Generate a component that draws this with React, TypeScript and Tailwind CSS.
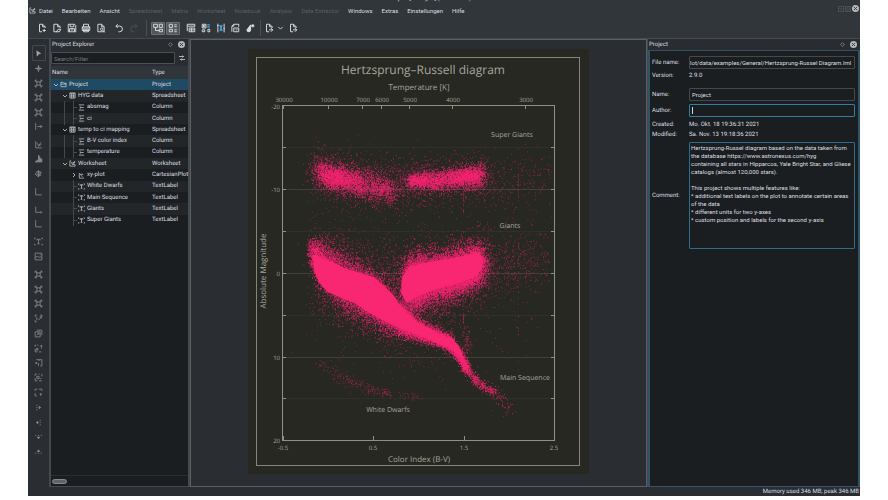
import type { ReactNode } from "react";

const MENU = [
  { label: "Datei" },
  { label: "Bearbeiten" },
  { label: "Ansicht" },
  { label: "Spreadsheet", off: true },
  { label: "Matrix", off: true },
  { label: "Worksheet", off: true },
  { label: "Notebook", off: true },
  { label: "Analysis", off: true },
  { label: "Data Extractor", off: true },
  { label: "Windows" },
  { label: "Extras" },
  { label: "Einstellungen" },
  { label: "Hilfe" },
];

// 16x16 outlines, stroked unless listed in FILLS
const ICONS: Record<string, string> = {
  doc: "M4 2h5l4 4v2M4 2v12h4M9 2v4h4M9 12h5M11.5 9.5v5",
  open: "M8 14H3V2h6l4 4v2M9 2v4h4M7 14l3-4h4l-2 4z",
  save: "M2 2h10l2 2v10H2zM5 2v4h6V2M4 14V9h8v5M6 11h4",
  print: "M4 6V2h8v4M2 6h12v6H2zM2 8h12M4 10h8v4H4z",
  preview: "M3 2h6l4 4v8H3zM9 2v4h4M7 10a2 2 0 1 0 4 0a2 2 0 1 0-4 0M11 12l3 3",
  undo: "M6 2L3 5l3 3M3 5h6a4 4 0 0 1 0 9H7",
  redo: "M10 2l3 3-3 3M13 5H7a4 4 0 0 0 0 9h2",
  tree: "M1 2h6v5H1zM10 2h5v5h-5zM10 10h5v4h-5zM4 7v5h6",
  props: "M2 2h5v5H2zM2 10h5v4H2zM10 3h4M10 6h4M10 11h4M10 14h4",
  workbook: "M2 13V2h12v4M2 5h12M5 8h9v6H5zM5 11h9M9 8v6",
  matrix: "M2 2h6v6H2zM4 3v4M6 3v4M2 11h4v3H2zM11 10h3v4h-3z",
  worksheet: "M3 1v14M13 1v14M2 4h2M12 9h2",
  notebook: "M3 14V5l3-3h8v4M6 8h8v6H6zM6 2v3H3M9 11h3",
  note: "M3 11l6-8v8a3 3 0 1 1-6 0M11 3h3v3h-3z",
  importDoc: "M4 2h5l4 4v2M4 2v12h4M9 2v4h4M8 11h6M11 8l3 3-3 3",
  chevron: "M4 6l4 4 4-4",
  cross: "M8 2v12M2 8h12M4 8l4-4 4 4-4 4z",
  zoomSel: "M2 2l4 4M14 2l-4 4M2 14l4-4M14 14l-4-4M5 5h6v6H5zM2 5V2h3M14 5V2h-3M2 11v3h3M14 11v3h-3",
  arrowRange: "M3 2v12M6 8h8M11 5l3 3-3 3",
  curve: "M3 2v12h11M5 5l3 5 5-6M7 11l6-3",
  hist: "M2 14h12V9h-3V7L8 2v9H5v3z",
  fit: "M2 9l6-6 5 4-5 7zM5 4l7 8M4 11l9-6M8 3v11",
  axis: "M3 2v12h11",
  axisH: "M3 3v10h11M12 11l2 2-2 2",
  text: "M1 4V2h2M13 2h2v2M1 12v2h2M15 12v2h-2M5 6V4h6v2M8 4v8M6 12h4",
  image: "M2 2h12v12H2zM2 11l4-4 3 3 2-2 3 3M10 5h2",
  zoomX: "M2 5V2h3M2 11v3h3M11 2h3v3M5 5v6M8 11l5-6M10 5h3v3",
  zoomBox: "M2 5h9v9H2zM5 2h9v9M5 11l4-4M6 7h3v3",
  scaleA: "M2 5V2h2M2 9v5h4M9 14h4M13 2v6M11 4l2-2 2 2M6 2h2M4 8h3v3H4z",
  scaleB: "M4 3h10v11h-3M2 9h4M8 14V9M4 7v4M9 3v2",
  scaleC: "M2 5V2h3M8 2h2M14 2v4M2 9v5h4M12 9v2M9 14h5M5 6h4v4H5z",
  scaleD: "M2 5V2h4M9 2h5v3M2 9v5h3M10 11h4M12 9v5",
  right: "M5 3v2M5 7v2M5 11v2M9 6l3 2-3 2z",
  left: "M11 3v2M11 7v2M11 11v2M7 6L4 8l3 2z",
  down: "M2 6h2M7 6h2M12 6h2M6 9l2 3 2-3z",
  up: "M2 11h2M7 11h2M12 11h2M6 8l2-3 2 3z",
  sheet: "M2 2h12v12H2zM2 4h12M2 9h12M6 4v10M10 4v10",
  column: "M2 2h12M4 8h9M2 14h12M5 4v2M5 10v2",
  page: "M5 2H2v12h12v-3M5 5l3 5 6-8M8 6h6M8 10h6",
  plot: "M3 2v12h11M5 5h6M5 5l5 6M11 5v2",
  folder: "M2 13V3h5l2 2h5v8zM2 7h12",
  sliders: "M2 5h9M9 3l2 2-2 2M14 11H5M7 9l-2 2 2 2",
  cursor: "M4 2l9 6-5 1-3 5z",
};

// second colour of the two-tone icons
const ACCENTS: Record<string, string> = {
  matrix: "M10 3h4M10 6h4",
  worksheet: "M6 3l4 10M10 3L6 13",
};

const FILLS = ["cursor", "hist", "note", "left", "right", "up", "down"];

function Icon({ name, className = "size-2.5" }: { name: string; className?: string }) {
  return (
    <svg viewBox="0 0 16 16" className={className} aria-hidden="true">
      <path
        d={ICONS[name]}
        fill={FILLS.includes(name) ? "currentColor" : "none"}
        stroke="currentColor"
        strokeWidth="1.5"
      />
      {ACCENTS[name] && <path d={ACCENTS[name]} fill="none" stroke="#3daee9" strokeWidth="2" />}
    </svg>
  );
}

function ToolButton({ name, label, className = "" }: { name: string; label: string; className?: string }) {
  return (
    <button type="button" aria-label={label} className={`flex h-[13px] items-center justify-center ${className}`}>
      <Icon name={name} />
    </button>
  );
}

function Toolbar() {
  return (
    <div className="flex h-5 shrink-0 items-center bg-[#31363b] pl-1.5 text-[#dcdee0]">
      <ToolButton name="doc" label="New" className="w-[15px]" />
      <ToolButton name="open" label="Open" className="w-[15px]" />
      <ToolButton name="save" label="Save" className="w-[15px]" />
      <ToolButton name="print" label="Print" className="w-[14px]" />
      <ToolButton name="preview" label="Print preview" className="w-[15px]" />
      <ToolButton name="undo" label="Undo" className="ml-[3px] w-[15px]" />
      <ToolButton name="redo" label="Redo" className="w-[15px] text-[#4b5054]" />
      <span className="ml-[5px] h-4 w-px bg-[#4a4f54]" />
      <div className="ml-1 flex gap-px">
        <ToolButton name="tree" label="Project explorer" className="w-[14px] rounded-[1px] border border-[#6a6f73] bg-[#52575b]" />
        <ToolButton name="props" label="Properties" className="w-[14px] rounded-[1px] border border-[#6a6f73] bg-[#52575b]" />
      </div>
      <ToolButton name="workbook" label="Workbook" className="ml-[3px] w-[15px]" />
      <ToolButton name="matrix" label="Matrix" className="w-[15px]" />
      <ToolButton name="worksheet" label="Worksheet" className="w-[15px]" />
      <ToolButton name="notebook" label="Notebook" className="w-[14px]" />
      <ToolButton name="note" label="Note" className="w-[15px]" />
      <span className="ml-[3px] h-4 w-px bg-[#4a4f54]" />
      <ToolButton name="importDoc" label="Import" className="w-[15px]" />
      <ToolButton name="chevron" label="Import options" className="w-[9px]" />
      <ToolButton name="importDoc" label="Export" className="w-[15px]" />
    </div>
  );
}

const SIDE_GROUPS = [
  ["cursor", "cross", "zoomSel", "zoomSel", "zoomSel", "arrowRange"],
  ["curve", "hist", "fit"],
  ["axis"],
  ["axisH", "axis"],
  ["text", "image"],
  ["zoomSel", "zoomSel", "zoomSel", "zoomX", "zoomBox", "scaleA", "scaleB", "scaleC", "scaleD", "right", "left", "down", "up"],
];

function SideTools() {
  return (
    <div className="flex w-[21px] shrink-0 flex-col bg-[#2a2e32] pt-1.5 text-[#85898c]">
      <div className="flex h-[414px] flex-col items-center gap-[3px]">
        {SIDE_GROUPS.map((group, g) => (
          <div key={g} className="flex flex-col items-center" style={{ flexGrow: group.length, flexBasis: 0 }}>
            {group.map((name, i) => (
              <button
                key={i}
                type="button"
                aria-label={name}
                className={`flex min-h-0 w-[14px] flex-1 items-center justify-center ${
                  name === "cursor" ? "rounded-[1px] border border-[#44494d]" : ""
                }`}
              >
                <Icon name={name} className={name === "cursor" ? "size-[7px] text-[#a5a8aa]" : "size-[9px]"} />
              </button>
            ))}
          </div>
        ))}
      </div>
    </div>
  );
}

const TREE = [
  { name: "Project", type: "Project", icon: "folder", depth: 0, open: true },
  { name: "HYG data", type: "Spreadsheet", icon: "sheet", depth: 1, open: true },
  { name: "absmag", type: "Column", icon: "column", depth: 2 },
  { name: "ci", type: "Column", icon: "column", depth: 2 },
  { name: "temp to ci mapping", type: "Spreadsheet", icon: "sheet", depth: 1, open: true },
  { name: "B-V color index", type: "Column", icon: "column", depth: 2 },
  { name: "temperature", type: "Column", icon: "column", depth: 2 },
  { name: "Worksheet", type: "Worksheet", icon: "page", depth: 1, open: true },
  { name: "xy-plot", type: "CartesianPlot", icon: "plot", depth: 2, open: false },
  { name: "White Dwarfs", type: "TextLabel", icon: "text", depth: 2 },
  { name: "Main Sequence", type: "TextLabel", icon: "text", depth: 2 },
  { name: "Giants", type: "TextLabel", icon: "text", depth: 2 },
  { name: "Super Giants", type: "TextLabel", icon: "text", depth: 2 },
];

const LAST_BRANCH = TREE.findIndex((row) => row.name === "Worksheet");

function DockHeader({ title }: { title: string }) {
  return (
    <div className="flex h-[11px] shrink-0 items-center bg-[#292d31] pl-px pr-[3px]">
      <h2 className="flex-1">{title}</h2>
      <button type="button" aria-label={`Float ${title}`} className="mr-[5px]">
        <svg viewBox="0 0 8 8" className="size-[5px]">
          <path d="M4 1l3 3-3 3-3-3z" fill="none" stroke="#a5a8aa" />
        </svg>
      </button>
      <CloseButton label={`Close ${title}`} />
    </div>
  );
}

function CloseButton({ label }: { label: string }) {
  return (
    <button type="button" aria-label={label}>
      <svg viewBox="0 0 16 16" className="size-[7px]">
        <circle cx="8" cy="8" r="8" fill="#b4b7b9" />
        <path d="M4.500 4.500l7 7M11.500 4.500l-7 7" stroke="#31363b" strokeWidth="2" />
      </svg>
    </button>
  );
}

function Guide({ line, dash }: { line: boolean; dash?: boolean }) {
  return (
    <span className="flex h-[12px] w-[9px] shrink-0 items-center pl-1">
      <span className={`h-full w-px ${line ? "bg-[#44494d]" : ""}`} />
      {dash && <span className="h-px w-[3px] bg-[#44494d]" />}
    </span>
  );
}

function Explorer() {
  return (
    <section className="flex w-[141px] shrink-0 flex-col border-x-2 border-b border-[#44494d] bg-[#1b1e20]">
      <DockHeader title="Project Explorer" />
      <div className="flex h-4 shrink-0 items-center bg-[#292d31]">
        <input
          aria-label="Search/Filter"
          placeholder="Search/Filter"
          className="h-3 w-0 flex-1 rounded-[1px] border border-[#4b5054] bg-[#1b1e20] px-0.5 outline-none placeholder:text-[#75797c]"
        />
        <button type="button" aria-label="Filter options" className="flex w-[13px] justify-center">
          <Icon name="sliders" className="size-2" />
        </button>
      </div>
      <table className="h-[160px] w-full table-fixed border-collapse text-left">
        <thead>
          <tr className="h-[13px] bg-[#30353a]">
            <th className="p-0 pl-px font-normal">Name</th>
            <th className="w-[37px] p-0 pl-px font-normal">Type</th>
          </tr>
        </thead>
        <tbody>
          {TREE.map((row, i) => (
            <tr key={row.name} className={i === 0 ? "bg-[#1f4a63]" : i % 2 ? "bg-[#232629]" : "bg-[#1b1e20]"}>
              <td className="p-0">
                <div className="flex h-[11px] items-center whitespace-nowrap">
                  {row.depth > 0 && <Guide line={false} />}
                  {row.depth > 1 && <Guide line={i < LAST_BRANCH} />}
                  {row.open === undefined ? (
                    <Guide line dash />
                  ) : (
                    <span className="flex w-[9px] shrink-0 justify-center">
                      <Icon name="chevron" className={`size-2 ${row.open ? "" : "-rotate-90"}`} />
                    </span>
                  )}
                  <Icon name={row.icon} className="mr-0.5 size-[7px]" />
                  {row.name}
                </div>
              </td>
              <td className="py-0 pl-px">{row.type}</td>
            </tr>
          ))}
        </tbody>
      </table>
      <div className="mt-auto flex h-[11px] items-center border-t border-[#292d31] pl-px">
        <span className="h-[5px] w-[15px] rounded-full border border-[#85898c] bg-[#606568]" />
      </div>
    </section>
  );
}

// ---- star field ----

function makeRandom(seed: number) {
  let s = seed;
  return () => {
    s = (s * 1664525 + 1013904223) % 4294967296;
    return s / 4294967296;
  };
}

const rand = makeRandom(20211);
const gauss = () => Math.sqrt(-2 * Math.log(rand() + 1e-9)) * Math.cos(2 * Math.PI * rand());

// x, y, spread, weight of the segment that starts here
type Knot = [number, number, number, number];

function band(count: number, knots: Knot[], blur = 2) {
  const total = knots.slice(0, -1).reduce((sum, k) => sum + k[3], 0);
  let d = "";
  for (let n = 0; n < count; n++) {
    let pick = rand() * total;
    let i = 0;
    while (i < knots.length - 2 && pick > knots[i][3]) {
      pick -= knots[i][3];
      i++;
    }
    const t = rand();
    const a = knots[i];
    const b = knots[i + 1];
    const x = a[0] + (b[0] - a[0]) * t + gauss() * blur;
    const y = a[1] + (b[1] - a[1]) * t + gauss() * (a[2] + (b[2] - a[2]) * t);
    if (x > 36 && x < 305 && y > 58 && y < 389) d += `M${x.toFixed(1)} ${y.toFixed(1)}h.8`;
  }
  return d;
}

const DENSE = [
  // super giants
  band(2800, [[70, 121, 6, 1], [78, 127, 6, 4], [98, 131, 6, 2], [115, 136, 7, 2], [145, 142, 6, 1]], 4),
  band(3200, [[161, 132, 3, 2], [185, 132, 5, 2], [210, 129, 5, 3], [234, 126, 6, 1]], 3),
  // main sequence
  band(11000, [[64, 201, 6, 1], [70, 214, 10, 3], [92, 231, 12, 3], [112, 241, 13, 3], [132, 254, 12, 3], [150, 269, 8, 2], [165, 278, 5, 1]], 3),
  band(4500, [[150, 269, 8, 2], [170, 281, 5, 3], [190, 289, 4, 2], [205, 296, 4, 2]], 1),
  band(1300, [[203, 295, 3, 3], [211, 306, 3, 3], [219, 321, 3, 2]], 2),
  band(420, [[217, 318, 3, 4], [230, 334, 3, 3], [246, 344, 3, 1], [262, 358, 5, 0]], 2),
  // giants
  band(14000, [[160, 234, 14, 3], [172, 233, 13, 3], [195, 227, 12, 3], [215, 222, 11, 3], [232, 214, 10, 1]], 5),
].join("");

const SPARSE = [
  band(2600, [[66, 122, 12, 2], [100, 130, 13, 2], [140, 137, 12, 2], [180, 133, 12, 2], [238, 130, 12, 1]], 6),
  band(3000, [[72, 205, 12, 1], [100, 225, 18, 1], [150, 236, 22, 1], [200, 230, 20, 1], [242, 218, 18, 1]], 6),
  band(1500, [[72, 240, 16, 1], [110, 255, 18, 1], [150, 262, 22, 1], [205, 270, 24, 1]], 8),
  band(230, [[230, 128, 15, 1], [302, 132, 14, 0]], 4),
  band(500, [[230, 216, 16, 2], [270, 215, 16, 1], [302, 212, 14, 0]], 4),
  band(210, [[70, 313, 3, 1], [92, 328, 4, 2], [118, 339, 3, 2], [140, 345, 2, 1], [175, 349, 3, 0]], 3),
  band(80, [[219, 283, 5, 1], [219, 304, 7, 0]], 2),
  band(160, [[50, 225, 40, 1], [110, 260, 40, 1], [290, 280, 40, 0]], 5),
  band(110, [[60, 150, 30, 1], [300, 150, 30, 0]], 5),
  // columns of rounded colour values
  band(30, [[215, 120, 2, 1], [215, 166, 2, 0]], 0),
  band(30, [[215, 235, 8, 1], [215, 280, 8, 0]], 0),
  band(16, [[270, 112, 3, 1], [270, 156, 3, 0]], 0),
  band(24, [[270, 192, 5, 1], [270, 320, 5, 0]], 0),
  band(30, [[152, 272, 5, 1], [152, 310, 3, 0]], 14),
].join("");

// saturated cores
const CORES =
  "M66 207L72 210L84 214L98 221L112 225L125 229L136 238L145 247L150 255L165 271L170 275L190 285L204 291L210 298L215 309L210 305L204 299L190 293L170 285L150 277L132 269L120 262L107 253L94 248L80 242L72 233L67 221Z" +
  "M155 229L161 219L176 215L200 211L220 207L230 204L234 210L233 220L225 228L205 235L185 240L170 246L159 252L154 244Z";

const TOP_TICKS: [number, string][] = [
  [35, "30000"],
  [80, "10000"],
  [114, "7000"],
  [133, "6000"],
  [161, "5000"],
  [204, "4000"],
  [277, "3000"],
];
const BOTTOM_TICKS: [number, string][] = [[35, "-0.5"], [125, "0.5"], [216, "1.5"], [306, "2.5"]];
const LEFT_TICKS: [number, string][] = [[57, "-20"], [140, "-10"], [224, "0"], [308, "10"], [391, "20"]];
const MINOR = [98, 182, 266, 349];

function Diagram() {
  return (
    <svg
      viewBox="0 0 341 425"
      className="h-auto w-[341px] shrink-0 bg-[#272822]"
      role="img"
      aria-label="Hertzsprung–Russell diagram"
      fontFamily='"Open Sans", "Noto Sans", sans-serif'
      fill="#a6a69c"
      textAnchor="middle"
    >
      <rect x="8.500" y="8.500" width="323" height="408" fill="none" stroke="#85867a" />
      <text x="175" y="25" fontSize="12">Hertzsprung–Russell diagram</text>
      <text x="171" y="41" fontSize="8">Temperature [K]</text>
      <g fill="none" strokeWidth="1">
        {[140, 224, 308].map((y) => (
          <path key={y} d={`M35 ${y + 0.5}H306`} stroke="#3f4037" />
        ))}
        {MINOR.map((y) => (
          <path key={y} d={`M35 ${y + 0.5}H306`} stroke="#2f3029" />
        ))}
      </g>
      <path d={SPARSE} stroke="#f92672" strokeWidth=".7" opacity=".75" />
      <path d={DENSE} stroke="#f92672" strokeWidth=".8" />
      <path d={CORES} fill="#f92672" stroke="#f92672" strokeWidth="2" strokeLinejoin="round" />
      <rect x="34.500" y="56.500" width="272" height="335" fill="none" stroke="#909186" />
      <g stroke="#909186">
        {TOP_TICKS.map(([x]) => (
          <path key={x} d={`M${x + 0.5} 57v3`} />
        ))}
        {BOTTOM_TICKS.map(([x]) => (
          <path key={x} d={`M${x + 0.5} 391v-4`} />
        ))}
        {[98, 140, 182, 224, 266, 308, 349].map((y) => (
          <path key={y} d={`M35 ${y + 0.5}h3M306 ${y + 0.5}h-3`} />
        ))}
      </g>
      <g fontSize="6">
        {TOP_TICKS.map(([x, label]) => (
          <text key={label} x={x + 1} y="53">{label}</text>
        ))}
        {BOTTOM_TICKS.map(([x, label]) => (
          <text key={label} x={x} y="401">{label}</text>
        ))}
        {LEFT_TICKS.map(([y, label]) => (
          <text key={label} x="32" y={y + 3} textAnchor="end">{label}</text>
        ))}
      </g>
      <g fontSize="7">
        <text x="264" y="88">Super Giants</text>
        <text x="262" y="179">Giants</text>
        <text x="277" y="331">Main Sequence</text>
        <text x="140" y="363">White Dwarfs</text>
      </g>
      <text x="171" y="413" fontSize="8">Color Index (B-V)</text>
      <text transform="translate(18 222) rotate(-90)" fontSize="8">Absolute Magnitude</text>
    </svg>
  );
}

const COMMENT = `Hertzsprung-Russel diagram based on the data taken from
the database https://www.astronexus.com/hyg
containing all stars in Hipparcos, Yale Bright Star, and Gliese
catalogs (almost 120,000 stars).

This project shows multiple features like:
* additional text labels on the plot to annotate certain areas
of the data
* different units for two y-axes
* custom position and labels for the second y-axis`;

function Field({ id, label, children }: { id?: string; label: string; children: ReactNode }) {
  return (
    <>
      <label htmlFor={id} className="self-center">{label}</label>
      {children}
    </>
  );
}

function Properties() {
  const input = "h-[13px] w-full min-w-0 rounded-[1px] border bg-[#1b1e20] outline-none";
  return (
    <section className="flex w-[213px] shrink-0 flex-col border-l border-[#44494d]">
      <DockHeader title="Project" />
      <div className="flex-1 border-2 border-t border-b border-[#2f5466] bg-[#1b1e20] pl-0.5 pr-[3px] pt-[5px]">
        <div className="grid grid-cols-[37px_1fr]">
          <Field id="file" label="File name:">
            <input id="file" readOnly value="lot/data/examples/General/Hertzsprung-Russel Diagram.lml" className={`${input} border-[#44494d] px-0`} />
          </Field>
          <Field label="Version:">
            <output className="flex h-[13px] items-center">2.9.0</output>
          </Field>
          <div className="col-span-2 h-1.5" />
          <Field id="name" label="Name:">
            <input id="name" defaultValue="Project" className={`${input} border-[#44494d] px-0.5`} />
          </Field>
          <div className="col-span-2 h-[3px]" />
          <Field id="author" label="Author:">
            <div className="relative flex">
              <input id="author" className={`${input} border-[#2f7f9d] px-0.5`} />
              <span className="absolute left-[3px] top-[3px] h-[7px] w-px bg-[#d5d7d8]" />
            </div>
          </Field>
          <div className="col-span-2 h-[3px]" />
          <Field label="Created:">
            <output className="flex h-[10px] items-center">Mo. Okt. 18 19:36:31 2021</output>
          </Field>
          <Field label="Modified:">
            <output className="flex h-[10px] items-center">Sa. Nov. 13 19:18:36 2021</output>
          </Field>
          <div className="col-span-2 h-0.5" />
          <Field id="comment" label="Comment:">
            <textarea
              id="comment"
              defaultValue={COMMENT}
              className="h-[107px] w-full resize-none overflow-hidden whitespace-pre rounded-[1px] border border-[#2f6d87] bg-transparent px-px pt-px leading-[8px] outline-none"
            />
          </Field>
        </div>
      </div>
    </section>
  );
}

export default function App() {
  return (
    <div className="flex h-screen flex-col bg-white px-7 pb-1 font-[Roboto,'Noto_Sans',sans-serif] text-[6px] leading-[8px] text-[#dcdee0] [text-rendering:geometricPrecision]">
      <div className="flex min-h-0 flex-1 flex-col bg-[#2a2e32]">
        <header className="shrink-0 bg-[#31363b]">
          <div className="flex h-[3px] items-end justify-center overflow-hidden">
            <span>Project [Changed] (Maximised) — LabPlot</span>
          </div>
          <div className="flex h-[15px] items-center pl-px">
            <Icon name="page" className="mr-[3px] size-[7px]" />
            <nav className="flex gap-[9px]">
              {MENU.map((item) => (
                <button key={item.label} type="button" disabled={item.off} className={item.off ? "text-[#5a5f63]" : ""}>
                  {item.label}
                </button>
              ))}
            </nav>
            <div className="mb-1 ml-auto flex items-center gap-px pr-px text-[#75797c]">
              <button type="button" aria-label="Minimize">
                <svg viewBox="0 0 14 14" className="size-1.5">
                  <path d="M1 1h12v12H1zM4 5l3 4 3-4" fill="none" stroke="currentColor" />
                </svg>
              </button>
              <button type="button" aria-label="Restore">
                <svg viewBox="0 0 14 14" className="size-1.5">
                  <path d="M1 1h12v12H1zM7 3l4 4-4 4-4-4z" fill="none" stroke="currentColor" />
                </svg>
              </button>
              <CloseButton label="Close window" />
            </div>
          </div>
        </header>
        <Toolbar />
        <main className="flex min-h-0 flex-1 border-t border-[#44494d]">
          <SideTools />
          <Explorer />
          <div className="flex min-w-0 flex-1 justify-center border border-[#5a5f63] bg-[#2a2e32] pt-[9px]">
            <div>
              <Diagram />
            </div>
          </div>
          <Properties />
        </main>
        <footer className="flex h-[9px] shrink-0 items-center justify-end pr-px">Memory used 346 MB, peak 346 MB</footer>
      </div>
    </div>
  );
}
